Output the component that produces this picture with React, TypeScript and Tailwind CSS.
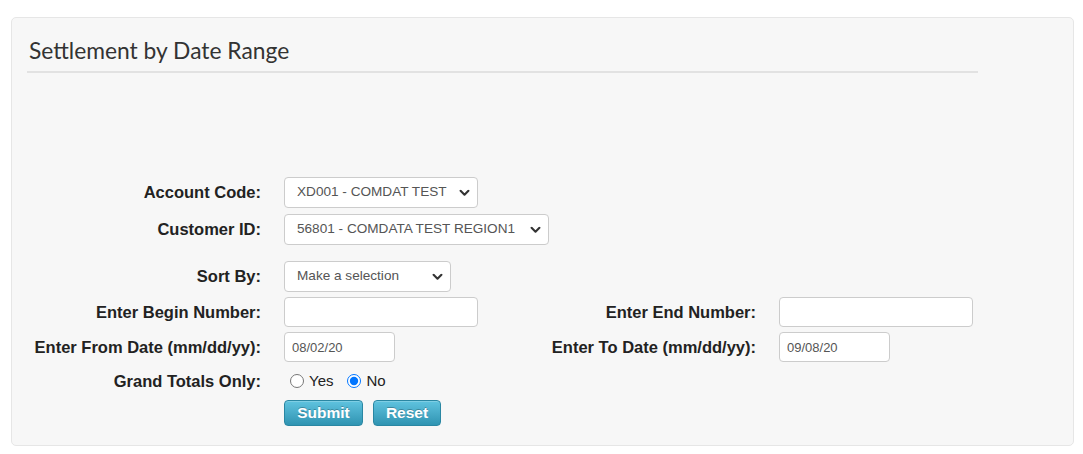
import { useState } from "react";

const labelCls = "text-right font-bold text-[16.5px] text-[#222] leading-none";
const inputCls =
  "bg-white border border-[#cccccc] rounded-[4px] px-[7px] text-[13px] text-[#555] outline-none";

const Chevron = () => (
  <svg viewBox="0 0 12 8" className="w-[11px] h-[7px]" fill="none" stroke="#333" strokeWidth="2.4" strokeLinecap="round" strokeLinejoin="round">
    <path d="M1.5 1.5 6 6l4.5-4.5" />
  </svg>
);

const SelectBox = ({ value, width, options }: { value: string; width: string; options: string[] }) => (
  <div className={`relative ${width}`}>
    <select
      defaultValue={value}
      className="appearance-none w-full h-[31px] bg-white border border-[#cccccc] rounded-[4px] pl-[12px] pr-[30px] text-[13.6px] text-[#555] outline-none"
    >
      {options.map(o => (
        <option key={o}>{o}</option>
      ))}
    </select>
    <span className="pointer-events-none absolute right-[8px] top-1/2 -translate-y-1/2 flex">
      <Chevron />
    </span>
  </div>
);

const App = () => {
  const [grandTotals, setGrandTotals] = useState("no");

  return (
    <div className="w-[1083px] h-[454px] bg-white pt-[17px] pl-[11px] pr-[9px]" style={{ fontFamily: '"Liberation Sans", Arial, sans-serif' }}>
      <div className="h-[429px] bg-[#f7f7f7] border border-[#e6e6e6] rounded-[5px] pt-[18px]">
        <div className="ml-[15px] w-[951px] border-b-2 border-[#e2e2e2] pb-[6px] pl-[2px]">
          <h1 className="text-[22.8px] leading-[29px] text-[#333]" style={{ fontFamily: "Lato, sans-serif" }}>
            Settlement by Date Range
          </h1>
        </div>

        <form className="mt-[104px] flex flex-col" onSubmit={e => e.preventDefault()}>
          <div className="flex items-center gap-[23px] h-[31px]">
            <label className={`w-[249px] ${labelCls}`}>Account Code:</label>
            <SelectBox value="XD001 - COMDAT TEST" width="w-[194px]" options={["XD001 - COMDAT TEST"]} />
          </div>

          <div className="flex items-center gap-[23px] h-[31px] mt-[6px]">
            <label className={`w-[249px] ${labelCls}`}>Customer ID:</label>
            <SelectBox value="56801 - COMDATA TEST REGION1" width="w-[265px]" options={["56801 - COMDATA TEST REGION1"]} />
          </div>

          <div className="flex items-center gap-[23px] h-[31px] mt-[16px]">
            <label className={`w-[249px] ${labelCls}`}>Sort By:</label>
            <SelectBox value="Make a selection" width="w-[167px]" options={["Make a selection", "Date", "Number"]} />
          </div>

          <div className="flex items-center h-[30px] mt-[5px]">
            <label className={`w-[249px] ${labelCls}`}>Enter Begin Number:</label>
            <div className="w-[246px] ml-[23px]">
              <input type="text" className={`${inputCls} w-[194px] h-[30px]`} />
            </div>
            <label className={`w-[226px] ${labelCls}`}>Enter End Number:</label>
            <input type="text" className={`${inputCls} ml-[23px] w-[194px] h-[30px]`} />
          </div>

          <div className="flex items-center h-[30px] mt-[5px]">
            <label className={`w-[249px] ${labelCls}`}>Enter From Date (mm/dd/yy):</label>
            <div className="w-[246px] ml-[23px]">
              <input type="text" defaultValue="08/02/20" className={`${inputCls} w-[111px] h-[30px]`} />
            </div>
            <label className={`w-[226px] ${labelCls}`}>Enter To Date (mm/dd/yy):</label>
            <input type="text" defaultValue="09/08/20" className={`${inputCls} ml-[23px] w-[111px] h-[30px]`} />
          </div>

          <div className="flex items-center h-[18px] mt-[10px]">
            <label className={`w-[249px] ${labelCls}`}>Grand Totals Only:</label>
            <div className="ml-[29px] flex items-center text-[15px] text-[#222]">
              <label className="flex items-center gap-[5px]">
                <input
                  type="radio"
                  name="gt"
                  checked={grandTotals === "yes"}
                  onChange={() => setGrandTotals("yes")}
                  className="w-[14px] h-[14px] accent-[#0075ff]"
                />
                Yes
              </label>
              <label className="flex items-center gap-[5px] ml-[14px]">
                <input
                  type="radio"
                  name="gt"
                  checked={grandTotals === "no"}
                  onChange={() => setGrandTotals("no")}
                  className="w-[14px] h-[14px] accent-[#0075ff]"
                />
                No
              </label>
            </div>
          </div>

          <div className="flex items-center gap-[10px] ml-[272px] mt-[10px]">
            <button
              type="submit"
              className="w-[79px] h-[26px] rounded-[4px] border border-[#2a87a3] bg-gradient-to-b from-[#5fc3df] to-[#2f94b2] text-white font-bold text-[15.5px] [text-shadow:0_-1px_0_rgba(0,0,0,0.25)] shadow-[inset_0_1px_0_rgba(255,255,255,0.2)]"
            >
              Submit
            </button>
            <button
              type="reset"
              className="w-[68px] h-[26px] rounded-[4px] border border-[#2a87a3] bg-gradient-to-b from-[#5fc3df] to-[#2f94b2] text-white font-bold text-[15.5px] [text-shadow:0_-1px_0_rgba(0,0,0,0.25)] shadow-[inset_0_1px_0_rgba(255,255,255,0.2)]"
            >
              Reset
            </button>
          </div>
        </form>
      </div>
    </div>
  );
};

export default App;
